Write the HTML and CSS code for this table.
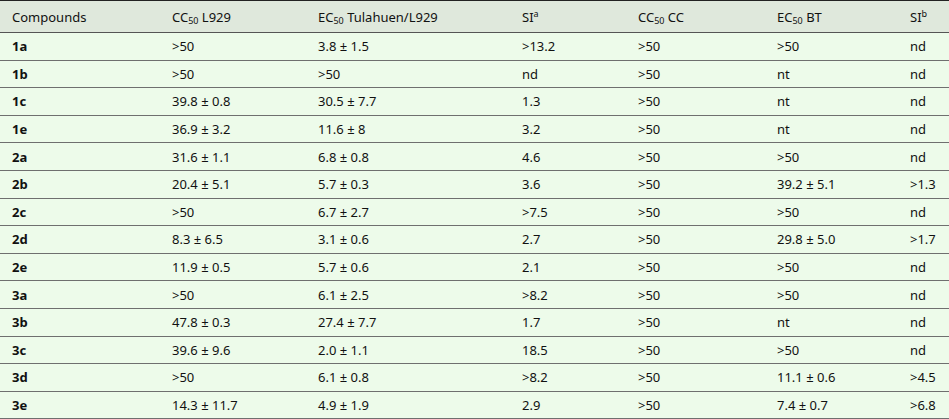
FILE: index.html
```html
<!DOCTYPE html>
<html>
<head>
<meta charset="utf-8">
<link rel="stylesheet" href="styles.css">
</head>
<body>
<table class="data">
<colgroup>
<col class="c1"><col class="c2"><col class="c3"><col class="c4"><col class="c5"><col class="c6"><col class="c7">
</colgroup>
<thead>
<tr><th>Compounds</th><th>CC<sub>50</sub> L929</th><th>EC<sub>50</sub> Tulahuen/L929</th><th>SI<sup>a</sup></th><th>CC<sub>50</sub> CC</th><th>EC<sub>50</sub> BT</th><th>SI<sup>b</sup></th></tr>
</thead>
<tbody>
<tr><td class="id">1a</td><td>&gt;50</td><td>3.8 ± 1.5</td><td>&gt;13.2</td><td>&gt;50</td><td>&gt;50</td><td>nd</td></tr>
<tr><td class="id">1b</td><td>&gt;50</td><td>&gt;50</td><td>nd</td><td>&gt;50</td><td>nt</td><td>nd</td></tr>
<tr><td class="id">1c</td><td>39.8 ± 0.8</td><td>30.5 ± 7.7</td><td>1.3</td><td>&gt;50</td><td>nt</td><td>nd</td></tr>
<tr><td class="id">1e</td><td>36.9 ± 3.2</td><td>11.6 ± 8</td><td>3.2</td><td>&gt;50</td><td>nt</td><td>nd</td></tr>
<tr><td class="id">2a</td><td>31.6 ± 1.1</td><td>6.8 ± 0.8</td><td>4.6</td><td>&gt;50</td><td>&gt;50</td><td>nd</td></tr>
<tr><td class="id">2b</td><td>20.4 ± 5.1</td><td>5.7 ± 0.3</td><td>3.6</td><td>&gt;50</td><td>39.2 ± 5.1</td><td>&gt;1.3</td></tr>
<tr><td class="id">2c</td><td>&gt;50</td><td>6.7 ± 2.7</td><td>&gt;7.5</td><td>&gt;50</td><td>&gt;50</td><td>nd</td></tr>
<tr><td class="id">2d</td><td>8.3 ± 6.5</td><td>3.1 ± 0.6</td><td>2.7</td><td>&gt;50</td><td>29.8 ± 5.0</td><td>&gt;1.7</td></tr>
<tr><td class="id">2e</td><td>11.9 ± 0.5</td><td>5.7 ± 0.6</td><td>2.1</td><td>&gt;50</td><td>&gt;50</td><td>nd</td></tr>
<tr><td class="id">3a</td><td>&gt;50</td><td>6.1 ± 2.5</td><td>&gt;8.2</td><td>&gt;50</td><td>&gt;50</td><td>nd</td></tr>
<tr><td class="id">3b</td><td>47.8 ± 0.3</td><td>27.4 ± 7.7</td><td>1.7</td><td>&gt;50</td><td>nt</td><td>nd</td></tr>
<tr><td class="id">3c</td><td>39.6 ± 9.6</td><td>2.0 ± 1.1</td><td>18.5</td><td>&gt;50</td><td>&gt;50</td><td>nd</td></tr>
<tr><td class="id">3d</td><td>&gt;50</td><td>6.1 ± 0.8</td><td>&gt;8.2</td><td>&gt;50</td><td>11.1 ± 0.6</td><td>&gt;4.5</td></tr>
<tr><td class="id">3e</td><td>14.3 ± 11.7</td><td>4.9 ± 1.9</td><td>2.9</td><td>&gt;50</td><td>7.4 ± 0.7</td><td>&gt;6.8</td></tr>
</tbody>
</table>
</body>
</html>
```
FILE: styles.css
```css
html, body {
  margin: 0;
  padding: 0;
  background: #ffffff;
}
.data {
  width: 949px;
  border-collapse: collapse;
  table-layout: fixed;
  font-family: "Noto Sans", "Open Sans", sans-serif;
  font-size: 13px;
  color: #111;
  background: #edfbea;
  border-top: 1px solid #222;
  border-bottom: 1px solid #222;
}
.c1 { width: 160px; }
.c2 { width: 146px; }
.c3 { width: 204px; }
.c4 { width: 116px; }
.c5 { width: 139px; }
.c6 { width: 133px; }
.c7 { width: 51px; }
.data th {
  background: #dfe8dc;
  font-weight: normal;
  text-align: left;
  padding: 0 12px;
  height: 31px;
  border-bottom: 1px solid #555;
}
.data td {
  text-align: left;
  padding: 0 12px;
  height: 26.6px;
  border-bottom: 1px solid #6f6f6f;
}
.data td.id {
  font-weight: bold;
}
.data sub, .data sup {
  font-size: 9px;
  line-height: 0;
}
.data sub { vertical-align: -2px; }
.data sup { vertical-align: 5px; }
```
